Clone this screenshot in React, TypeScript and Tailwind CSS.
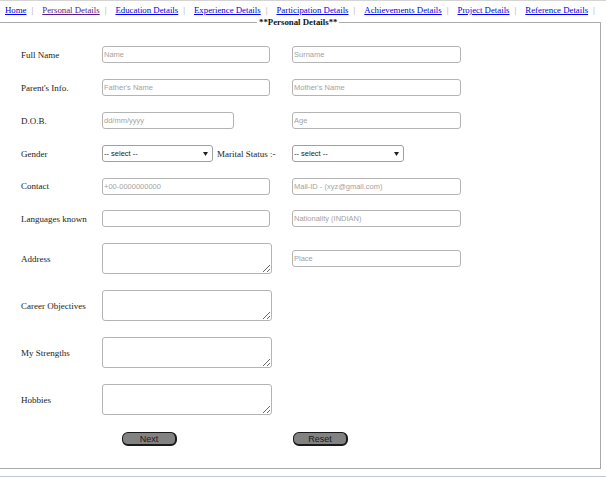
import React from "react";

const navLinks = [
  { label: "Home", visited: false },
  { label: "Personal Details", visited: true },
  { label: "Education Details", visited: false },
  { label: "Experience Details", visited: false },
  { label: "Participation Details", visited: false },
  { label: "Achievements Details", visited: false },
  { label: "Project Details", visited: false },
  { label: "Reference Details", visited: false },
];

const inputCls =
  "block h-[17px] rounded-[3px] border border-[#b4b4b4] bg-white px-[1px] font-['Liberation_Sans',Arial,sans-serif] text-[7.5px] text-[#222] placeholder:text-[#a3a3a3] outline-none";

function TextBox({ placeholder, className }: { placeholder?: string; className: string }) {
  return <input type="text" placeholder={placeholder} className={`${inputCls} ${className}`} />;
}

function Area() {
  return (
    <textarea className="block h-[31px] w-[170px] rounded-[3px] border border-[#b4b4b4] bg-white outline-none" />
  );
}

function Select({ className }: { className: string }) {
  return (
    <div className={`relative ${className}`}>
      <select className="block h-[17px] w-full appearance-none rounded-[3px] border border-[#a0a0a0] bg-white px-[1px] font-['Liberation_Sans',Arial,sans-serif] text-[7.5px] text-[#222] outline-none">
        <option>-- select --</option>
        <option>Male</option>
        <option>Female</option>
      </select>
      <svg className="pointer-events-none absolute right-[5px] top-[7px]" width="5" height="4" viewBox="0 0 5 4">
        <path d="M0 0 H5 L2.5 4 Z" fill="#222" />
      </svg>
    </div>
  );
}

function Row({ label, h, children }: { label: string; h: string; children: React.ReactNode }) {
  return (
    <div className={`flex items-center ${h}`}>
      <div className="w-[81px] shrink-0 text-[9px] leading-[10px] text-[#222]">{label}</div>
      {children}
    </div>
  );
}

function Btn({ children, className }: { children: React.ReactNode; className?: string }) {
  return (
    <button
      className={`block h-[14px] w-[55px] rounded-[6px] border border-r-2 border-b-2 border-[#1a1a1a] bg-[#828282] font-['Liberation_Sans',Arial,sans-serif] text-[9px] leading-[10px] text-[#1a1a1a] ${className ?? ""}`}
    >
      {children}
    </button>
  );
}

export default function App() {
  return (
    <div className="h-[477px] w-[606px] overflow-hidden border-t border-[#d4d4d4] bg-white font-['Liberation_Serif','Times_New_Roman',serif]">
      {/* top navigation */}
      <nav className="flex h-[16px] pl-[5px] pt-[4px] text-[8.8px] leading-[10px]">
        {navLinks.map((l) => (
          <span key={l.label} className="flex">
            <a href="#" className={`underline ${l.visited ? "text-[#551a8b]" : "text-[#0000ee]"}`}>
              {l.label}
            </a>
            <span className="ml-[5px] mr-[9px] text-[#999]">|</span>
          </span>
        ))}
      </nav>

      <fieldset className="-ml-[4px] w-[605px] border border-[#a9a9a9] p-0">
        <legend className="ml-[260px] px-[2px] text-[8.8px] font-bold leading-[10px] text-[#111]">
          **Personal Details**
        </legend>

        <div className="flex flex-col pb-[13px] pl-[24px] pt-[11px]">
          <Row label="Full Name" h="h-[33px]">
            <TextBox placeholder="Name" className="w-[168px]" />
            <TextBox placeholder="Surname" className="ml-[22px] w-[169px]" />
          </Row>
          <Row label="Parent's Info." h="h-[33px]">
            <TextBox placeholder="Father's Name" className="w-[168px]" />
            <TextBox placeholder="Mother's Name" className="ml-[22px] w-[169px]" />
          </Row>
          <Row label="D.O.B." h="h-[33px]">
            <TextBox placeholder="dd/mm/yyyy" className="w-[132px]" />
            <TextBox placeholder="Age" className="ml-[58px] w-[169px]" />
          </Row>
          <Row label="Gender" h="h-[33px]">
            <Select className="w-[111px]" />
            <span className="ml-[4px] w-[75px] text-[9px] leading-[10px] text-[#222]">Marital Status :-</span>
            <Select className="w-[112px]" />
          </Row>
          <Row label="Contact" h="h-[32px]">
            <TextBox placeholder="+00-0000000000" className="w-[168px]" />
            <TextBox placeholder="Mail-ID - (xyz@gmail.com)" className="ml-[22px] w-[169px]" />
          </Row>
          <Row label="Languages known" h="h-[33px]">
            <TextBox className="w-[168px]" />
            <TextBox placeholder="Nationality (INDIAN)" className="ml-[22px] w-[169px]" />
          </Row>
          <Row label="Address" h="h-[47px]">
            <Area />
            <TextBox placeholder="Place" className="ml-[20px] w-[169px]" />
          </Row>
          <Row label="Career Objectives" h="h-[47px]">
            <Area />
          </Row>
          <Row label="My Strengths" h="h-[47px]">
            <Area />
          </Row>
          <Row label="Hobbies" h="h-[47px]">
            <Area />
          </Row>
          <div className="flex h-[32px] items-center pl-[101px]">
            <Btn>Next</Btn>
            <Btn className="ml-[116px]">Reset</Btn>
          </div>
        </div>
      </fieldset>

      <div className="mt-[7px] h-px w-full bg-[#b9cbe0]" />
    </div>
  );
}
